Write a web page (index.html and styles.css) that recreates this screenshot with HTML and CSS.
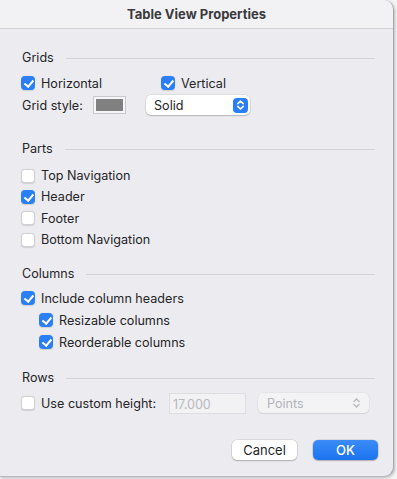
FILE: index.html
```html
<!DOCTYPE html>
<html lang="en">
<head>
  <meta charset="UTF-8">
  <title>Table View Properties</title>
  <link rel="stylesheet" href="styles.css">
</head>
<body>
  <div class="window">
    <div class="titlebar">Table View Properties</div>

    <div class="content">
      <!-- Grids -->
      <div class="section-head"><span>Grids</span><div class="rule"></div></div>
      <div class="row two-col">
        <label class="check col-a"><span class="box on"></span>Horizontal</label>
        <label class="check"><span class="box on"></span>Vertical</label>
      </div>
      <div class="row grid-style">
        <span class="lbl">Grid style:</span>
        <span class="well"><span class="swatch"></span></span>
        <div class="popup">
          <span>Solid</span>
          <span class="stepper">
            <svg width="9" height="12" viewBox="0 0 9 12"><path d="M1.8 4.6 L4.5 2 L7.2 4.6 M1.8 7.4 L4.5 10 L7.2 7.4" fill="none" stroke="#fff" stroke-width="1.6" stroke-linecap="round" stroke-linejoin="round"/></svg>
          </span>
        </div>
      </div>

      <!-- Parts -->
      <div class="section-head parts"><span>Parts</span><div class="rule"></div></div>
      <div class="list parts-list">
        <label class="check"><span class="box"></span>Top Navigation</label>
        <label class="check"><span class="box on"></span>Header</label>
        <label class="check"><span class="box"></span>Footer</label>
        <label class="check"><span class="box"></span>Bottom Navigation</label>
      </div>

      <!-- Columns -->
      <div class="section-head columns"><span>Columns</span><div class="rule"></div></div>
      <div class="list cols-list">
        <label class="check"><span class="box on"></span>Include column headers</label>
        <label class="check indent"><span class="box on"></span>Resizable columns</label>
        <label class="check indent"><span class="box on"></span>Reorderable columns</label>
      </div>

      <!-- Rows -->
      <div class="section-head rows"><span>Rows</span><div class="rule"></div></div>
      <div class="row custom-height">
        <label class="check height-check"><span class="box"></span>Use custom height:</label>
        <div class="field">17.000</div>
        <div class="popup disabled">
          <span>Points</span>
          <svg width="9" height="12" viewBox="0 0 9 12"><path d="M1.8 4.6 L4.5 2 L7.2 4.6 M1.8 7.4 L4.5 10 L7.2 7.4" fill="none" stroke="#b4b4b8" stroke-width="1.3" stroke-linecap="round" stroke-linejoin="round"/></svg>
        </div>
      </div>

      <div class="buttons">
        <button class="btn">Cancel</button>
        <button class="btn primary">OK</button>
      </div>
    </div>
  </div>
</body>
</html>
```

FILE: styles.css
```css
html, body {
  margin: 0;
  padding: 0;
}
body {
  background: #f4f4f4;
  font-family: Inter, "Liberation Sans", Arial, sans-serif;
  font-size: 12.6px;
  color: #252528;
  width: 397px;
  height: 479px;
  overflow: hidden;
}
.window {
  width: 393px;
  height: 476px;
  background: #ececf0;
  border-right: 1px solid #a9a9ad;
  border-bottom: 1px solid #b8b8bc;
  border-radius: 0 10px 10px 0;
  box-shadow: 1px 1px 3px rgba(0,0,0,0.25);
  overflow: hidden;
}
.titlebar {
  height: 28px;
  line-height: 28px;
  text-align: center;
  font-weight: 700;
  font-size: 13px;
  color: #3a3a3d;
  background: #f2f2f5;
  border-bottom: 1px solid #d4d4d8;
}
.content {
  padding: 0 18px 0 21px;
}
.section-head {
  display: flex;
  align-items: center;
  height: 16px;
  margin-top: 20px;
  padding-left: 1px;
  gap: 12px;
}
.section-head .rule {
  flex: 1;
  height: 1px;
  background: #d3d3d8;
  margin-top: 2px;
}
.section-head.parts { margin-top: 24px; }
.section-head.columns { margin-top: 15px; }
.section-head.rows { margin-top: 16px; }

.row {
  display: flex;
  align-items: center;
}
.two-col {
  margin-top: 8px;
  height: 20px;
}
.col-a {
  width: 140px;
}
.check {
  display: flex;
  align-items: center;
  gap: 6px;
  height: 21px;
}
.box {
  width: 14px;
  height: 14px;
  box-sizing: border-box;
  border-radius: 3.5px;
  background: #fff;
  border: 1px solid #cfcfd4;
  box-shadow: 0 0.5px 1px rgba(0,0,0,0.12);
  position: relative;
}
.box.on {
  background: #2a7ef6;
  border-color: #2a7ef6;
}
.box.on::after {
  content: "";
  position: absolute;
  left: 4px;
  top: 1px;
  width: 3.5px;
  height: 7px;
  border-right: 2px solid #fff;
  border-bottom: 2px solid #fff;
  transform: rotate(40deg);
}
.grid-style {
  margin-top: 1px;
  height: 22px;
  padding-left: 1px;
}
.lbl {
  width: 71px;
}
.well {
  width: 33px;
  height: 18px;
  box-sizing: border-box;
  border: 1px solid #c9c9cd;
  background: #f6f6f8;
  padding: 2px;
}
.swatch {
  display: block;
  width: 100%;
  height: 100%;
  background: #808080;
}
.popup {
  display: flex;
  align-items: center;
  justify-content: space-between;
  margin-left: 20px;
  width: 104px;
  height: 20px;
  box-sizing: border-box;
  padding: 0 2px 0 8px;
  background: #fff;
  border-radius: 5px;
  box-shadow: 0 0 0 0.5px rgba(0,0,0,0.12), 0 1px 1.5px rgba(0,0,0,0.18);
}
.stepper {
  display: flex;
  align-items: center;
  justify-content: center;
  width: 15px;
  height: 15px;
  border-radius: 4px;
  background: #2a7ef6;
}
.list {
  display: flex;
  flex-direction: column;
}
.parts-list {
  margin-top: 9px;
}
.parts-list .check {
  height: 21.3px;
}
.cols-list {
  margin-top: 6px;
}
.cols-list .check {
  height: 22px;
}
.indent {
  margin-left: 18px;
}
.custom-height {
  margin-top: 7px;
  height: 22px;
}
.height-check {
  width: 148px;
}
.field {
  width: 77px;
  height: 21px;
  box-sizing: border-box;
  padding: 3px 0 0 3px;
  background: #f2f2f5;
  border: 1px solid #dedee2;
  color: #b7b7bb;
}
.popup.disabled {
  margin-left: 12px;
  width: 111px;
  padding: 0 8px 0 9px;
  background: #f3f3f6;
  color: #b4b4b8;
  box-shadow: 0 0 0 0.5px rgba(0,0,0,0.06), 0 1px 1px rgba(0,0,0,0.08);
}
.buttons {
  display: flex;
  justify-content: flex-end;
  gap: 16px;
  margin-top: 26px;
  margin-right: -3px;
}
.btn {
  font-family: inherit;
  font-size: 13px;
  width: 65px;
  height: 20px;
  border: none;
  border-radius: 5px;
  background: #fff;
  color: #262628;
  box-shadow: 0 0 0 0.5px rgba(0,0,0,0.15), 0 1px 1.5px rgba(0,0,0,0.2);
  padding: 0;
}
.btn.primary {
  background: linear-gradient(#3b8cf8, #1b73ef);
  color: #fff;
  font-weight: 500;
}
```
